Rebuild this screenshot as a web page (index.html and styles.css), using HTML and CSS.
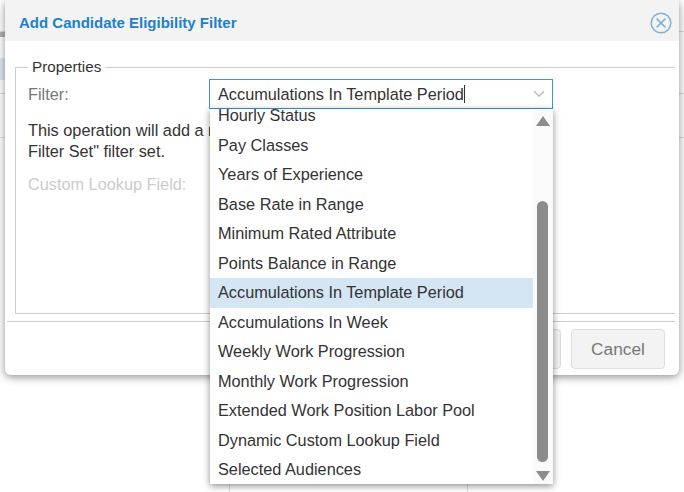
FILE: index.html
```html
<!DOCTYPE html>
<html lang="en">
<head>
  <meta charset="UTF-8">
  <meta name="viewport" content="width=device-width, initial-scale=1.0">
  <title>Add Candidate Eligibility Filter</title>
  <link rel="stylesheet" href="styles.css">
</head>
<body>

<!-- page behind the dialog -->
<div class="page">
  <div class="page-bar"></div>
  <div class="page-tab"></div>
  <div class="page-rule first"></div>
  <div class="page-rule"></div>
  <div class="page-cols">
    <div class="page-col"></div>
    <div class="page-col"></div>
  </div>
</div>

<div class="dialog">
  <div class="dialog-head">
    <div class="dialog-title">Add Candidate Eligibility Filter</div>
    <svg class="close-icon" width="22" height="22" viewBox="0 0 22 22" fill="none" stroke="#7fb2da">
      <circle cx="11" cy="11" r="9.8" stroke-width="1.5"/>
      <path d="M6.6 6.6 15.4 15.4M15.4 6.6 6.6 15.4" stroke-width="1.5"/>
    </svg>
  </div>

  <fieldset class="props">
    <legend>Properties</legend>
    <div class="filter-row">
      <label class="filter-label">Filter:</label>
      <div class="combo">
        <span class="combo-value">Accumulations In Template Period</span>
        <span class="caret"></span>
        <svg class="chevron" width="12" height="8" viewBox="0 0 12 8" fill="none" stroke="#bdbdbd" stroke-width="1.6">
          <path d="M1 1.2 6 6.2 11 1.2"/>
        </svg>
      </div>
    </div>
    <p class="note">This operation will add a new filter to the "Eligibility<br>Filter Set" filter set.</p>
    <div class="lookup-label">Custom Lookup Field:</div>
  </fieldset>

  <div class="dialog-foot">
    <button class="btn">OK</button>
    <button class="btn">Cancel</button>
  </div>
</div>

<!-- open dropdown of the filter combo -->
<div class="dropdown">
  <ul class="options">
    <li>Hourly Status</li>
    <li>Pay Classes</li>
    <li>Years of Experience</li>
    <li>Base Rate in Range</li>
    <li>Minimum Rated Attribute</li>
    <li>Points Balance in Range</li>
    <li class="selected">Accumulations In Template Period</li>
    <li>Accumulations In Week</li>
    <li>Weekly Work Progression</li>
    <li>Monthly Work Progression</li>
    <li>Extended Work Position Labor Pool</li>
    <li>Dynamic Custom Lookup Field</li>
    <li>Selected Audiences</li>
  </ul>
  <div class="scrollbar">
    <span class="arrow-up"></span>
    <span class="thumb"></span>
    <span class="arrow-down"></span>
  </div>
</div>

</body>
</html>
```

FILE: styles.css
```css
html, body {
  height: 100%;
}
body {
  margin: 0;
  overflow: hidden;
  background: #fff;
  font-family: "Liberation Sans", Arial, sans-serif;
  font-size: 16.3px;
  color: #333;
}

/* page behind */
.page {
  height: 100%;
  display: flex;
  flex-direction: column;
}
.page-bar {
  height: 5px;
  margin-top: 31px;
  border-top: 1px solid #ddd;
  background: linear-gradient(to right, #b0b0b0 5px, transparent 5px);
}
.page-tab {
  width: 10px;
  height: 22px;
  margin-top: 21px;
  background: #dfe9f1;
}
.page-rule {
  height: 1px;
  margin-top: 43px;
  background: #ddd;
}
.page-rule.first {
  margin-top: 13px;
}
.page-cols {
  margin-top: auto;
  height: 12px;
  display: flex;
  padding-left: 229px;
  gap: 237px;
}
.page-col {
  width: 1px;
  background: #ddd;
}

/* dialog */
.dialog {
  position: absolute;
  left: 5px;
  top: -1px;
  width: 674px;
  height: 376px;
  display: flex;
  flex-direction: column;
  background: #fff;
  border-radius: 6px;
  box-shadow: 0 2px 8px rgba(0,0,0,0.45);
}
.dialog-head {
  height: 42px;
  flex-shrink: 0;
  display: flex;
  align-items: center;
  justify-content: space-between;
  padding: 0 7px 0 14px;
  background: #f3f3f3;
}
.dialog-title {
  margin-top: 5px;
  font-size: 15px;
  font-weight: bold;
  color: #1d80cc;
}
.close-icon {
  margin-top: 6px;
}

.props {
  margin: 17px 4px 0 10px;
  padding: 3px 0 0 12px;
  height: 256px;
  box-sizing: border-box;
  border: 1px solid #ccc;
  border-right: none;
  min-width: 0;
}
.props legend {
  padding: 0 4px;
  font-size: 15.2px;
  line-height: 18px;
  color: #333;
}
.filter-row {
  display: flex;
  align-items: center;
}
.filter-label {
  width: 181px;
  flex-shrink: 0;
  color: #777;
}
.combo {
  width: 344px;
  height: 30px;
  box-sizing: border-box;
  border: 1px solid #3d96d8;
  display: flex;
  align-items: center;
  padding-left: 8px;
}
.combo-value {
  color: #333;
}
.caret {
  width: 1px;
  height: 18px;
  background: #333;
}
.chevron {
  margin-left: auto;
  margin-right: 7px;
}
.note {
  margin: 11px 0 0;
  line-height: 21px;
  width: 500px;
}
.lookup-label {
  margin-top: 13px;
  color: #ccc;
}

.dialog-foot {
  margin: 7px 4px 0 2px;
  padding: 7px 10px 0 0;
  border-top: 1px solid #ccc;
  display: flex;
  justify-content: flex-end;
  gap: 10px;
}
.btn {
  width: 94px;
  height: 40px;
  border: 1px solid #ddd;
  border-radius: 4px;
  background: #f3f3f3;
  color: #777;
  font-family: inherit;
  font-size: 17.3px;
}

/* dropdown */
.dropdown {
  position: absolute;
  left: 210px;
  top: 109px;
  width: 343px;
  height: 375px;
  display: flex;
  overflow: hidden;
  background: #fff;
  box-shadow: 0 2px 7px rgba(0,0,0,0.45);
}
.options {
  flex: 1;
  margin: -8px 0 0;
  padding: 0;
  list-style: none;
}
.options li {
  height: 29.5px;
  line-height: 29.5px;
  padding-left: 8px;
}
.options li.selected {
  background: #d4e5f4;
}
.scrollbar {
  width: 20px;
  flex-shrink: 0;
  background: #fafafa;
  position: relative;
}
.thumb {
  position: absolute;
  left: 4px;
  top: 92px;
  width: 11px;
  height: 261px;
  border-radius: 6px;
  background: #8c8c8c;
}
.arrow-up,
.arrow-down {
  position: absolute;
  left: 3px;
  width: 0;
  height: 0;
  border-left: 7px solid transparent;
  border-right: 7px solid transparent;
}
.arrow-up {
  top: 7px;
  border-bottom: 10px solid #8c8c8c;
}
.arrow-down {
  top: 362px;
  border-top: 10px solid #8c8c8c;
}
```
